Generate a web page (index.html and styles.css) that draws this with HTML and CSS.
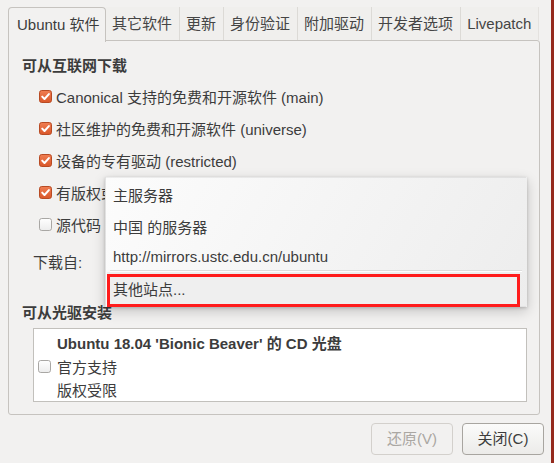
FILE: index.html
```html
<!DOCTYPE html>
<html lang="zh-CN">
<head>
<meta charset="utf-8">
<title>软件和更新</title>
<link rel="stylesheet" href="styles.css">
</head>
<body>
<div class="screen">
  <div class="window">
    <div class="tabs">
      <div class="tab active">Ubuntu 软件</div>
      <div class="tab">其它软件</div>
      <div class="tab">更新</div>
      <div class="tab">身份验证</div>
      <div class="tab">附加驱动</div>
      <div class="tab">开发者选项</div>
      <div class="tab">Livepatch</div>
    </div>
    <div class="frame">
      <div class="section-title">可从互联网下载</div>
      <div class="checks">
        <div class="check-row">
          <svg class="cb" width="13" height="13" viewBox="0 0 13 13"><defs><linearGradient id="og" x1="0" y1="0" x2="0" y2="1"><stop offset="0" stop-color="#f07e52"/><stop offset="1" stop-color="#d9572a"/></linearGradient></defs><rect x="0.5" y="0.5" width="12" height="12" rx="2.2" fill="url(#og)" stroke="#b84b24"/><path d="M3.2 6.6 L5.5 9 L9.9 4.1" fill="none" stroke="#fff" stroke-width="2" stroke-linecap="round" stroke-linejoin="round"/></svg>
          <span>Canonical 支持的免费和开源软件 (main)</span>
        </div>
        <div class="check-row">
          <svg class="cb" width="13" height="13" viewBox="0 0 13 13"><rect x="0.5" y="0.5" width="12" height="12" rx="2.2" fill="url(#og)" stroke="#b84b24"/><path d="M3.2 6.6 L5.5 9 L9.9 4.1" fill="none" stroke="#fff" stroke-width="2" stroke-linecap="round" stroke-linejoin="round"/></svg>
          <span>社区维护的免费和开源软件 (universe)</span>
        </div>
        <div class="check-row">
          <svg class="cb" width="13" height="13" viewBox="0 0 13 13"><rect x="0.5" y="0.5" width="12" height="12" rx="2.2" fill="url(#og)" stroke="#b84b24"/><path d="M3.2 6.6 L5.5 9 L9.9 4.1" fill="none" stroke="#fff" stroke-width="2" stroke-linecap="round" stroke-linejoin="round"/></svg>
          <span>设备的专有驱动 (restricted)</span>
        </div>
        <div class="check-row">
          <svg class="cb" width="13" height="13" viewBox="0 0 13 13"><rect x="0.5" y="0.5" width="12" height="12" rx="2.2" fill="url(#og)" stroke="#b84b24"/><path d="M3.2 6.6 L5.5 9 L9.9 4.1" fill="none" stroke="#fff" stroke-width="2" stroke-linecap="round" stroke-linejoin="round"/></svg>
          <span>有版权或法律限制的软件 (multiverse)</span>
        </div>
        <div class="check-row">
          <svg class="cb" width="13" height="13" viewBox="0 0 13 13"><defs><linearGradient id="wg" x1="0" y1="0" x2="0" y2="1"><stop offset="0" stop-color="#ffffff"/><stop offset="1" stop-color="#ececec"/></linearGradient></defs><rect x="0.5" y="0.5" width="12" height="12" rx="2.2" fill="url(#wg)" stroke="#a9a7a4"/></svg>
          <span>源代码</span>
        </div>
      </div>
      <div class="download-row">下载自:</div>
      <div class="section-title cd-title">可从光驱安装</div>
      <div class="listbox">
        <svg class="cb list-cb" width="13" height="13" viewBox="0 0 13 13"><rect x="0.5" y="0.5" width="12" height="12" rx="2.2" fill="url(#wg)" stroke="#a9a7a4"/></svg>
        <div class="cd-lines">
          <div class="cd-name">Ubuntu 18.04 'Bionic Beaver' 的 CD 光盘</div>
          <div>官方支持</div>
          <div>版权受限</div>
        </div>
      </div>
    </div>
    <div class="buttons">
      <div class="btn disabled">还原(V)</div>
      <div class="btn">关闭(C)</div>
    </div>
    <div class="popup">
      <div class="item item-main">主服务器</div>
      <div class="item item-cn">中国 的服务器</div>
      <div class="item item-url">http://mirrors.ustc.edu.cn/ubuntu</div>
      <div class="sep"></div>
      <div class="item item-other">其他站点...</div>
      <div class="mark"></div>
    </div>
  </div>
  <div class="edge"></div>
</div>
</body>
</html>
```

FILE: styles.css
```css
html, body {
  margin: 0;
  padding: 0;
}
body {
  background: #f2f1f0;
  font-family: "Liberation Sans", "Noto Sans CJK SC", sans-serif;
  font-size: 15px;
  color: #3c3c3c;
}
.screen {
  display: flex;
  width: 554px;
  height: 463px;
  overflow: hidden;
}
.window {
  position: relative;
  flex: 1;
  min-width: 0;
  display: flex;
  flex-direction: column;
  padding: 7px 7px 0 8px;
  background: #f2f1f0;
}
.edge {
  flex: none;
  width: 3px;
  background: #952a1d;
}

/* tabs */
.tabs {
  display: flex;
  align-items: flex-start;
  height: 34px;
  margin-bottom: -1px;
  margin-right: 4px;
}
.tab {
  flex: none;
  height: 33px;
  line-height: 33px;
  padding: 0 6.5px;
  border-right: 1px solid #dcdad6;
  color: #454545;
  white-space: nowrap;
  background: #f0efed;
}
.tab:last-child {
  border-right: 1px solid #e4e2df;
}
.tab.active {
  position: relative;
  z-index: 1;
  height: 34px;
  line-height: 33px;
  padding: 0 5px 0 8px;
  border: 1px solid #c6c3bf;
  border-bottom: none;
  border-radius: 4px 4px 0 0;
  background: #f2f1f0;
  color: #3c3c3c;
}

/* frame */
.frame {
  display: flex;
  flex-direction: column;
  margin-right: 4px;
  padding: 15px 12px 12px 13px;
  border: 1px solid #c6c3bf;
  border-radius: 0 3px 3px 3px;
}
.section-title {
  font-weight: bold;
  line-height: 20px;
  height: 20px;
}
.checks {
  margin-top: 4px;
  display: flex;
  flex-direction: column;
}
.check-row {
  display: flex;
  align-items: center;
  height: 32px;
  padding-left: 17px;
  gap: 4px;
  white-space: nowrap;
}
.cb {
  flex: none;
  display: block;
}
.download-row {
  margin-top: 7px;
  height: 32px;
  line-height: 32px;
  padding-left: 11px;
}
.cd-title {
  margin-top: 24px;
}
.listbox {
  margin: 5px 0 0 11px;
  height: 74px;
  box-sizing: border-box;
  border: 1px solid #c2c0bc;
  background: #ffffff;
  display: flex;
  align-items: center;
  padding-left: 4px;
  gap: 6px;
}
.list-cb {
  margin-top: 3px;
}
.cd-lines {
  align-self: flex-start;
  padding-top: 3px;
  line-height: 23.5px;
  white-space: nowrap;
}
.cd-name {
  font-weight: bold;
}

/* buttons */
.buttons {
  display: flex;
  justify-content: flex-end;
  gap: 9px;
  margin-top: 8px;
}
.btn {
  width: 82px;
  height: 32px;
  box-sizing: border-box;
  line-height: 30px;
  text-align: center;
  border: 1px solid #a8a5a0;
  border-radius: 4px;
  background: linear-gradient(#fbfbfa, #ecebe9);
  color: #3c3c3c;
}
.btn.disabled {
  border-color: #d3d0cc;
  background: #f2f1f0;
  color: #aaa7a2;
}

/* popup menu */
.popup {
  position: absolute;
  left: 105px;
  top: 177px;
  width: 422px;
  height: 130px;
  box-sizing: border-box;
  padding-top: 3px;
  background: linear-gradient(120deg, #fcfcfc, #f3f3f3 60%, #ededed);
  border: 1px solid rgba(0, 0, 0, 0.05);
  box-shadow: 0 1px 3px rgba(0, 0, 0, 0.18), 0 4px 12px rgba(0, 0, 0, 0.2);
  z-index: 5;
}
.item {
  padding-left: 7px;
  height: 30px;
  line-height: 30px;
  white-space: nowrap;
  color: #3c3c3c;
}
.item-cn {
  margin-top: 2px;
}
.item-url {
  height: 27px;
  line-height: 27px;
}
.sep {
  margin: 0 4px;
  border-top: 1px solid #dedede;
  border-bottom: 1px solid #ffffff;
}
.item-other {
  margin: 0 6px 0 1px;
  padding-left: 6px;
  height: 33px;
  line-height: 36px;
  background: #efefef;
}
.mark {
  position: absolute;
  left: 1px;
  top: 96px;
  width: 413px;
  height: 33px;
  box-sizing: border-box;
  border: 3px solid #ff1c1c;
}
```
